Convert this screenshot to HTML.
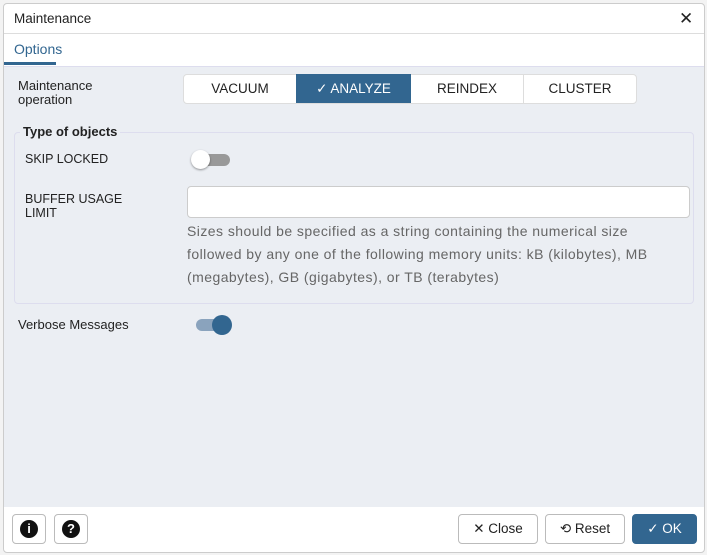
<!DOCTYPE html>
<html><head><style>
body{margin:0;width:707px;height:555px;background:#f3f3f3;font-family:"Liberation Sans",sans-serif;position:relative;overflow:hidden;font-size:13px;color:#222}
.dlg{position:absolute;left:3px;top:3px;width:700px;height:548px;background:#fff;border:1px solid #ccc;border-radius:4px;overflow:hidden}
.a{position:absolute}
.seg{position:absolute;top:70px;height:29px;line-height:29px;text-align:center;font-size:13.5px;color:#222}
.btn{position:absolute;top:510px;height:30px;border:1px solid #bbb;border-radius:4px;background:#fff;box-sizing:border-box;font-size:13.5px;line-height:28px;color:#222}
</style></head><body>
<div class="dlg">
 <div class="a" style="left:10px;top:7px;font-size:13.5px">Maintenance</div>
 <div class="a" style="left:675px;top:5px;font-size:17px;font-weight:300">✕</div>
 <div class="a" style="left:0;top:29px;width:700px;height:1px;background:#ddd"></div>
 <div class="a" style="left:10px;top:37px;font-size:14px;color:#326690">Options</div>
 <div class="a" style="left:0;top:58px;width:52px;height:3px;background:#326690"></div>
 <div class="a" style="left:0;top:62px;width:700px;height:440px;background:#ebeef3;border-top:1px solid #dde"></div>
 <div class="a" style="left:14px;top:75px;line-height:14px;font-size:13px">Maintenance<br>operation</div>
 <div class="a" style="left:179px;top:70px;width:452px;height:28px;border:1px solid #ddd;border-radius:4px;background:#fff"></div>
 <div class="seg" style="left:180px;width:112px">VACUUM</div>
 <div class="seg" style="left:292px;width:115px;background:#326690;color:#fff">✓ ANALYZE</div>
 <div class="seg" style="left:407px;width:112px;border-right:1px solid #ddd">REINDEX</div>
 <div class="seg" style="left:520px;width:112px">CLUSTER</div>
 <div class="a" style="left:10px;top:128px;width:678px;height:170px;border:1px solid #dde;border-radius:4px"></div>
 <div class="a" style="left:16px;top:120px;background:#ebeef3;padding:0 3px;font-weight:bold;font-size:13px">Type of objects</div>
 <div class="a" style="left:21px;top:148px;font-size:12.5px">SKIP LOCKED</div>
 <div class="a" style="left:191px;top:150px;width:35px;height:12px;border-radius:6px;background:#999"></div>
 <div class="a" style="left:187px;top:146px;width:19px;height:19px;border-radius:50%;background:#fff;box-shadow:0 1px 2px rgba(0,0,0,.4)"></div>
 <div class="a" style="left:21px;top:188px;font-size:12.5px;line-height:14px">BUFFER USAGE<br>LIMIT</div>
 <div class="a" style="left:183px;top:182px;width:501px;height:30px;background:#fff;border:1px solid #ccc;border-radius:4px"></div>
 <div class="a" style="left:183px;top:216px;font-size:14px;letter-spacing:.45px;line-height:23px;color:#666;white-space:nowrap">Sizes should be specified as a string containing the numerical size<br>followed by any one of the following memory units: kB (kilobytes), MB<br>(megabytes), GB (gigabytes), or TB (terabytes)</div>
 <div class="a" style="left:14px;top:313px;font-size:13px">Verbose Messages</div>
 <div class="a" style="left:192px;top:315px;width:35px;height:12px;border-radius:6px;background:#8aa3bd"></div>
 <div class="a" style="left:208px;top:311px;width:20px;height:20px;border-radius:50%;background:#326690"></div>
 <div class="btn" style="left:8px;width:34px;text-align:center"><span style="display:inline-block;width:18px;height:18px;border-radius:50%;background:#111;color:#fff;font-weight:bold;line-height:18px;font-size:13px;margin-top:5px">i</span></div>
 <div class="btn" style="left:50px;width:34px;text-align:center"><span style="display:inline-block;width:18px;height:18px;border-radius:50%;background:#111;color:#fff;font-weight:bold;line-height:18px;font-size:13px;margin-top:5px">?</span></div>
 <div class="btn" style="left:454px;width:80px;text-align:center">✕ Close</div>
 <div class="btn" style="left:541px;width:80px;text-align:center">⟲ Reset</div>
 <div class="btn" style="left:628px;width:65px;text-align:center;background:#326690;color:#fff;border-color:#326690">✓ OK</div>
</div>
</body></html>
